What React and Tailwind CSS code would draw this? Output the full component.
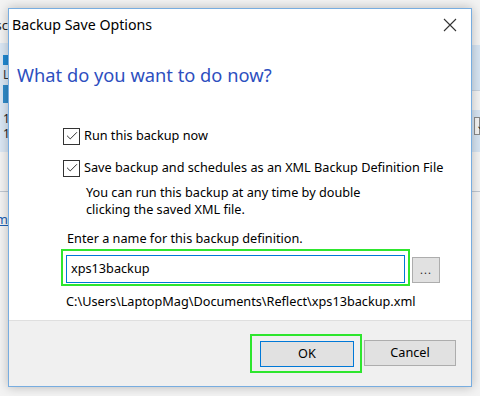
import { Check } from 'lucide-react'

const font = "font-['Segoe_UI','Noto_Sans',sans-serif]"

// Tiny slices of the app window behind the dialog
function LeftStrip() {
  return (
    <div className="w-[8px] flex flex-col overflow-hidden">
      <div className="h-[17px]" />
      <div className="h-[16px] text-[13px] leading-[16px] text-[#222] flex justify-end whitespace-nowrap">sc</div>
      <div className="h-[10px]" />
      <div className="h-[109px] bg-[#dae7f4] flex flex-col pl-[3px]">
        <div className="h-[12px]" />
        <div className="h-[10px] bg-[#1e88d2]" />
        <div className="h-[20px] text-[12px] leading-[20px] text-[#333]">L</div>
        <div className="h-[18px] bg-[#2f8bca]" />
        <div className="h-[8px]" />
        <div className="h-[15px] text-[12px] leading-[15px] text-[#222]">1</div>
        <div className="h-[15px] text-[12px] leading-[15px] text-[#222]">1</div>
      </div>
      <div className="h-[39px]" />
      <div className="h-px bg-[#bfc8d2]" />
      <div className="h-[18px]" />
      <div className="h-[18px] text-[13px] leading-[18px] text-[#1a5fb4] underline flex justify-end">m</div>
    </div>
  )
}

function RightStrip() {
  return (
    <div className="w-[8px] flex flex-col overflow-hidden">
      <div className="h-[45px]" />
      <div className="h-[45px] bg-[#d6e4f2]" />
      <div className="h-px bg-[#c9d3de]" />
      <div className="h-[19px]" />
      <div className="h-[42px] bg-[#d6e4f2] flex flex-col pt-[7px] pl-[2px]">
        <div className="h-[18px] border border-[#8a8a8a] bg-[#f4f4f4] text-[10px] leading-[14px] text-[#222] pl-[1px]">⌄</div>
      </div>
      <div className="h-[39px]" />
      <div className="h-px bg-[#bfc8d2]" />
    </div>
  )
}

function CheckRow({ label }) {
  return (
    <div className="flex items-center h-[20px]">
      <div className="w-[17px] h-[17px] border border-[#333] bg-white flex items-center justify-center">
        <Check size={14} strokeWidth={1.6} color="#222" />
      </div>
      <span className="ml-[4px] text-[12.7px] text-black whitespace-nowrap">{label}</span>
    </div>
  )
}

export default function App() {
  return (
    <div className={`relative w-[480px] h-[396px] overflow-hidden bg-white ${font}`}>
      <div className="flex w-full h-full bg-[#f3f3f3]">
        <LeftStrip />
        <div className="flex-1" />
        <RightStrip />
      </div>

      <div className="absolute left-[8px] top-[8px] w-[464px] h-[379px] border border-[#78ade0] bg-white flex flex-col shadow-[0_0_10px_rgba(0,0,0,0.25)]">
        <div className="h-[32px] flex items-center justify-between pl-[3px] pr-[12px]">
          <span className="text-[14.2px] text-black">Backup Save Options</span>
          <svg width="14" height="14" viewBox="0 0 14 14" className="mr-[2px]">
            <path d="M1 1 L13 13 M13 1 L1 13" stroke="#333" strokeWidth="1.1" fill="none" />
          </svg>
        </div>

        <div className="h-[279px] flex flex-col">
          <h1 className="mt-[20px] ml-[8px] text-[18.3px] leading-[28px] text-[#2d4fc0] font-normal">
            What do you want to do now?
          </h1>

          <div className="ml-[54px] mt-[37px] flex flex-col">
            <CheckRow label="Run this backup now" />
            <div className="mt-[12px]">
              <CheckRow label="Save backup and schedules as an XML Backup Definition File" />
            </div>
            <div className="mt-[6px] ml-[23px] text-[12.7px] leading-[17px] text-black">
              <div>You can run this backup at any time by double</div>
              <div>clicking the saved XML file.</div>
            </div>
            <div className="mt-[10px] ml-[4px] text-[12.7px] leading-[20px] text-black">
              Enter a name for this backup definition.
            </div>
            <div className="flex items-start mt-px -ml-[2px]">
              <div className="w-[349px] h-[37px] border-2 border-[#2ee62e] pt-[4px] pl-[3px] pr-[3px]">
                <div className="h-[28px] border border-[#0078d7] bg-white flex items-center pl-[4px] text-[12.7px] text-black">
                  xps13backup
                </div>
              </div>
              <div className="ml-[2px] mt-[8px] w-[28px] h-[26px] border border-[#adadad] bg-[#e1e1e1] flex items-center justify-center text-[11px] text-[#222] tracking-[1px]">
                ...
              </div>
            </div>
            <div className="mt-[5px] ml-[3px] text-[12.7px] leading-[20px] text-black">
              C:\Users\LaptopMag\Documents\Reflect\xps13backup.xml
            </div>
          </div>
        </div>

        <div className="flex-1 border-t border-[#dfdfdf] bg-[#f0f0f0] flex justify-end items-start pt-[13px] pr-[15px]">
          <div className="border-2 border-[#2ee62e] pt-[4px] pb-[4px] pl-[8px] pr-[6px]">
            <button className="w-[94px] h-[26px] border border-[#0078d7] bg-[#e1e1e1] text-[12.7px] text-black">OK</button>
          </div>
          <button className="ml-[2px] mt-[6px] w-[92px] h-[26px] border border-[#adadad] bg-[#e1e1e1] text-[12.7px] text-black">
            Cancel
          </button>
        </div>
      </div>
    </div>
  )
}
